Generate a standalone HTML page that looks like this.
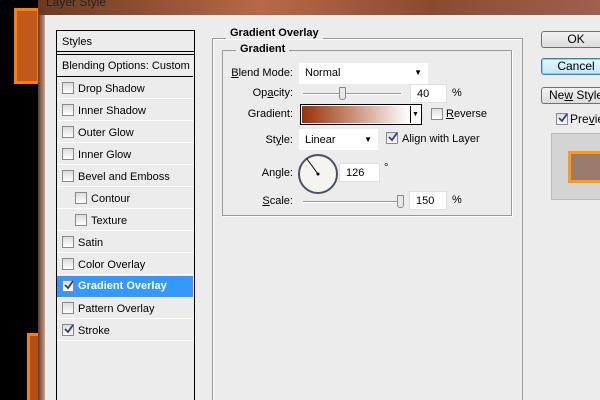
<!DOCTYPE html>
<html><head><style>
*{margin:0;padding:0;box-sizing:border-box}
html,body{width:600px;height:400px;overflow:hidden}
body{background:#000;position:relative;font-family:"Liberation Sans",Arial,sans-serif;font-size:11px;color:#000;white-space:nowrap}
.a{position:absolute}
.row{position:absolute;left:57px;width:136px;height:22px;border-bottom:1px solid #fff;line-height:24px;padding-left:18px;font-size:11px}
.cb{position:absolute;width:12px;height:12px;border:1px solid #8a8a8a;background:linear-gradient(#dcdcdc,#fff);}
.row .cb{left:5px;top:5px}
.lbl{position:absolute;text-align:right;font-size:11px}
.inp{position:absolute;background:#fff;border:1px solid #e0e0e0;padding-left:6px;line-height:18px;font-size:11px}
.btn{position:absolute;left:541px;width:70px;height:17px;border:1px solid #707070;border-radius:3px;background:linear-gradient(#f2f2f2,#dcdcdc);font-size:12px;line-height:15px;text-align:center}
.tick{position:absolute;left:1px;top:-1px}
</style></head><body>
<div class="a" style="left:14px;top:8px;width:26px;height:76px;background:#c05a1a;border:3px solid #ff7a10"></div>
<div class="a" style="left:27px;top:333px;width:13px;height:70px;background:#b0501a;border-left:3px solid #ff7a10;border-top:3px solid #ff7a10"></div>
<div class="a" style="left:38px;top:0;width:562px;height:15px;background:linear-gradient(90deg,#6a3a20,#b8684a 40%,#8a4a30 70%,#a06050)"></div>
<div class="a" style="left:46px;top:-5px;font-size:12px;color:#222">Layer Style</div>
<div class="a" style="left:38px;top:15px;width:7px;height:385px;background:linear-gradient(90deg,#5a3a2a,#9a6a58,#c0a090)"></div>
<div class="a" style="left:45px;top:15px;width:555px;height:385px;background:#ececec;border-left:1px solid #fff"></div>

<div class="a" style="left:56px;top:30px;width:139px;height:380px;border:1px solid #000;background:#ececec"></div>
<div class="a" style="left:57px;top:31px;width:136px;height:21px;line-height:22px;padding-left:5px">Styles</div>
<div class="a" style="left:57px;top:51px;width:137px;height:4px;border-top:1px solid #000;border-bottom:1px solid #000"></div>
<div class="a" style="left:57px;top:55px;width:136px;height:22px;line-height:22px;padding-left:5px;border-bottom:1px solid #000">Blending Options: Custom</div>
<div class="row" style="top:77px"><span class="cb"></span>&nbsp;Drop Shadow</div>
<div class="row" style="top:99px"><span class="cb"></span>&nbsp;Inner Shadow</div>
<div class="row" style="top:121px"><span class="cb"></span>&nbsp;Outer Glow</div>
<div class="row" style="top:143px"><span class="cb"></span>&nbsp;Inner Glow</div>
<div class="row" style="top:165px"><span class="cb"></span>&nbsp;Bevel and Emboss</div>
<div class="row" style="top:187px;padding-left:31px"><span class="cb" style="left:18px"></span>&nbsp;Contour</div>
<div class="row" style="top:209px;padding-left:31px"><span class="cb" style="left:18px"></span>&nbsp;Texture</div>
<div class="row" style="top:231px"><span class="cb"></span>&nbsp;Satin</div>
<div class="row" style="top:253px"><span class="cb"></span>&nbsp;Color Overlay</div>
<div class="row" style="top:276px;height:21px;line-height:21px;background:#3399ff;color:#fff;font-weight:bold;border:none"><span class="cb" style="top:4px"><svg class="tick" width="10" height="10"><path d="M1 5 L4 8 L9 1" stroke="#2a3f8f" stroke-width="1.8" fill="none"/></svg></span>&nbsp;Gradient Overlay</div>
<div class="row" style="top:297px"><span class="cb"></span>&nbsp;Pattern Overlay</div>
<div class="row" style="top:319px"><span class="cb"><svg class="tick" width="10" height="10"><path d="M1 5 L4 8 L9 1" stroke="#2a3f8f" stroke-width="1.8" fill="none"/></svg></span>&nbsp;Stroke</div>

<div class="a" style="left:212px;top:38px;width:311px;height:380px;border:1px solid #999;box-shadow:inset 1px 1px #fff"></div>
<div class="a" style="left:226px;top:27px;padding:0 4px;background:#ececec;font-weight:bold">Gradient Overlay</div>
<div class="a" style="left:222px;top:50px;width:290px;height:166px;border:1px solid #999;box-shadow:1px 1px #fff"></div>
<div class="a" style="left:236px;top:43px;padding:0 4px;background:#ececec;font-weight:bold">Gradient</div>

<div class="lbl" style="left:223px;width:70px;top:67px"><u>B</u>lend Mode:</div>
<div class="inp" style="left:299px;top:63px;width:129px;height:21px;line-height:20px;border:none">Normal<span class="a" style="right:6px;top:0;font-size:8px">▼</span></div>
<div class="lbl" style="left:223px;width:70px;top:87px">Op<u>a</u>city:</div>
<div class="a" style="left:303px;top:93px;width:98px;height:2px;border-top:1px solid #999;border-bottom:1px solid #fff"></div>
<div class="a" style="left:339px;top:87px;width:7px;height:13px;border:1px solid #888;border-radius:1px 1px 3px 3px;background:#e8e8e8"></div>
<div class="inp" style="left:410px;top:84px;width:37px;height:19px">40</div>
<div class="a" style="left:452px;top:87px">%</div>
<div class="lbl" style="left:223px;width:70px;top:108px">Gradient:</div>
<div class="a" style="left:300px;top:104px;width:122px;height:21px;border:1px solid #000;background:#fff"></div>
<div class="a" style="left:302px;top:106px;width:107px;height:17px;background:linear-gradient(90deg,#9a3208,#c88a70 45%,#fff)"></div>
<div class="a" style="left:410px;top:106px;width:10px;height:17px;border-left:1px solid #000;font-size:7px;text-align:center;line-height:17px">▼</div>
<span class="cb" style="left:431px;top:108px"></span>
<div class="a" style="left:446px;top:108px"><u>R</u>everse</div>
<div class="lbl" style="left:223px;width:70px;top:134px">St<u>y</u>le:</div>
<div class="inp" style="left:299px;top:129px;width:79px;height:21px;line-height:22px;border:none">Linear<span class="a" style="right:6px;top:0;font-size:8px">▼</span></div>
<span class="cb" style="left:386px;top:132px"><svg class="tick" width="10" height="10"><path d="M1 5 L4 8 L9 1" stroke="#2a3f8f" stroke-width="1.8" fill="none"/></svg></span>
<div class="a" style="left:402px;top:133px">Align with Layer</div>
<div class="lbl" style="left:223px;width:70px;top:167px">An<u>g</u>le:</div>
<svg class="a" style="left:297px;top:153px" width="42" height="42"><circle cx="21" cy="21" r="19" fill="#f6f4f0" stroke="#4a5068" stroke-width="2"/><line x1="21" y1="21" x2="10" y2="6" stroke="#000"/><circle cx="21" cy="21" r="1.5"/></svg>
<div class="inp" style="left:339px;top:163px;width:41px;height:19px">126</div>
<div class="a" style="left:384px;top:162px">°</div>
<div class="lbl" style="left:223px;width:70px;top:195px"><u>S</u>cale:</div>
<div class="a" style="left:303px;top:201px;width:98px;height:2px;border-top:1px solid #999;border-bottom:1px solid #fff"></div>
<div class="a" style="left:397px;top:195px;width:7px;height:13px;border:1px solid #888;border-radius:1px 1px 3px 3px;background:#e8e8e8"></div>
<div class="inp" style="left:409px;top:191px;width:38px;height:19px">150</div>
<div class="a" style="left:452px;top:194px">%</div>

<div class="btn" style="top:31px">OK</div>
<div class="btn" style="top:58px;border-color:#3c7fb1;box-shadow:inset 0 0 0 1px #8fd0f0;background:linear-gradient(#eaf6fd,#bee6fd)">Cancel</div>
<div class="btn" style="top:87px;text-align:left;padding-left:7px">Ne<u>w</u> Style...</div>
<span class="cb" style="left:556px;top:113px"><svg class="tick" width="10" height="10"><path d="M1 5 L4 8 L9 1" stroke="#2a3f8f" stroke-width="1.8" fill="none"/></svg></span>
<div class="a" style="left:570px;top:112px;font-size:12px">Pre<u>v</u>iew</div>
<div class="a" style="left:551px;top:133px;width:60px;height:67px;background:#d4d4d4;border:1px solid #bbb"></div>
<div class="a" style="left:568px;top:151px;width:40px;height:32px;background:#9a7a6c;border:3px solid #ff9a10"></div>
</body></html>
